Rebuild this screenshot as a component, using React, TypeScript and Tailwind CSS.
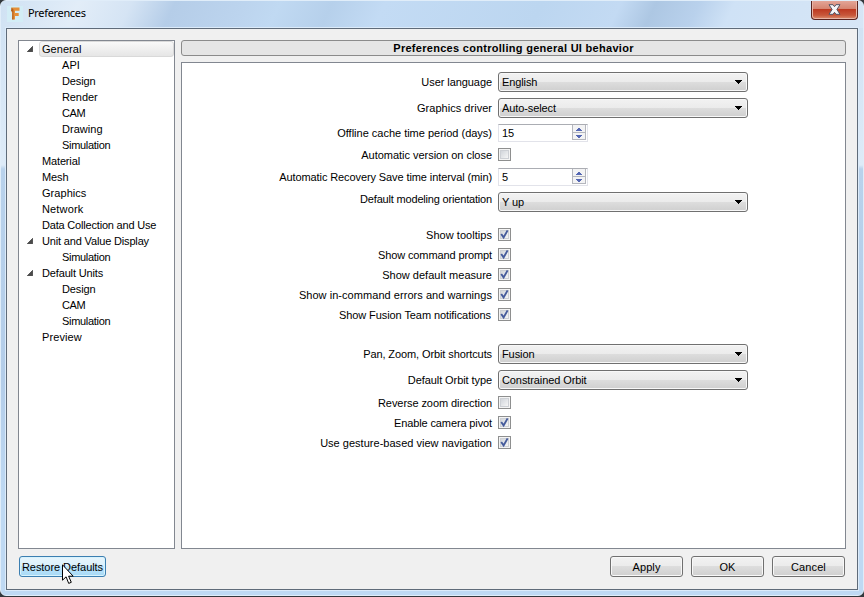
import React, { useState } from "react";

type ControlKind = "combo" | "spin" | "check";

interface SettingRow {
  label: string;
  kind: ControlKind;
  value?: string;
  checked?: boolean;
  className: string;
  labelClass: string;
}

interface TreeItem {
  label: string;
  child?: boolean;
  open?: boolean;
  tracking?: string;
}

const TREE: TreeItem[] = [
  { label: "General", open: true, tracking: "tracking-[0.05px]" },
  { label: "API", child: true, tracking: "tracking-[0.1px]" },
  { label: "Design", child: true },
  { label: "Render", child: true },
  { label: "CAM", child: true, tracking: "tracking-[-0.4px]" },
  { label: "Drawing", child: true, tracking: "tracking-[0.05px]" },
  { label: "Simulation", child: true, tracking: "tracking-[-0.3px]" },
  { label: "Material", tracking: "tracking-[-0.15px]" },
  { label: "Mesh" },
  { label: "Graphics", tracking: "tracking-[0.05px]" },
  { label: "Network", tracking: "tracking-[0.15px]" },
  { label: "Data Collection and Use", tracking: "tracking-[-0.19px]" },
  { label: "Unit and Value Display", open: true, tracking: "tracking-[-0.16px]" },
  { label: "Simulation", child: true, tracking: "tracking-[-0.3px]" },
  { label: "Default Units", open: true, tracking: "tracking-[-0.15px]" },
  { label: "Design", child: true },
  { label: "CAM", child: true, tracking: "tracking-[-0.4px]" },
  { label: "Simulation", child: true, tracking: "tracking-[-0.3px]" },
  { label: "Preview", tracking: "tracking-[0.1px]" },
];

const ROWS: SettingRow[] = [
  { label: "User language", kind: "combo", value: "English", className: "mt-[9px] h-5", labelClass: "tracking-[-0.07px]" },
  { label: "Graphics driver", kind: "combo", value: "Auto-select", className: "mt-1.5 h-5", labelClass: "tracking-[0.03px]" },
  { label: "Offline cache time period (days)", kind: "spin", value: "15", className: "mt-1.5 h-[18px]", labelClass: "tracking-[-0.01px]" },
  { label: "Automatic version on close", kind: "check", className: "mt-1.5 h-[13px]", labelClass: "pt-0.5 tracking-[-0.03px]" },
  { label: "Automatic Recovery Save time interval (min)", kind: "spin", value: "5", className: "mt-[7px] h-[18px]", labelClass: "tracking-[-0.1px]" },
  { label: "Default modeling orientation", kind: "combo", value: "Y up", className: "mt-1.5 h-5", labelClass: "pb-[5px] tracking-[-0.18px]" },
  { label: "Show tooltips", kind: "check", checked: true, className: "mt-4 h-[13px]", labelClass: "pt-0.5 tracking-[0.04px]" },
  { label: "Show command prompt", kind: "check", checked: true, className: "mt-[7px] h-[13px]", labelClass: "pt-0.5 tracking-[-0.11px]" },
  { label: "Show default measure", kind: "check", checked: true, className: "mt-[7px] h-[13px]", labelClass: "pt-0.5 tracking-[0.02px]" },
  { label: "Show in-command errors and warnings", kind: "check", checked: true, className: "mt-[7px] h-[13px]", labelClass: "pt-0.5 tracking-[0.05px]" },
  { label: "Show Fusion Team notifications", kind: "check", checked: true, className: "mt-[7px] h-[13px]", labelClass: "pt-0.5 pr-px tracking-[-0.08px]" },
  { label: "Pan, Zoom, Orbit shortcuts", kind: "combo", value: "Fusion", className: "mt-[23px] h-5", labelClass: "tracking-[-0.1px]" },
  { label: "Default Orbit type", kind: "combo", value: "Constrained Orbit", className: "mt-1.5 h-5", labelClass: "tracking-[-0.08px]" },
  { label: "Reverse zoom direction", kind: "check", className: "mt-1.5 h-[13px]", labelClass: "pt-0.5 tracking-[-0.07px]" },
  { label: "Enable camera pivot", kind: "check", checked: true, className: "mt-[7px] h-[13px]", labelClass: "pt-0.5 tracking-[-0.12px]" },
  { label: "Use gesture-based view navigation", kind: "check", checked: true, className: "mt-[7px] h-[13px]", labelClass: "pt-0.5 tracking-[0.02px]" },
];

function Combo({ value }: { value?: string }) {
  return (
    <button className="flex h-5 w-[250px] items-center justify-between rounded-[3px] border border-[#707070] bg-[linear-gradient(#f2f2f2_0%,#ebebeb_50%,#dddddd_50%,#cfcfcf_100%)] pr-[5px] pl-[3px] shadow-[inset_0_0_0_1px_#f8f8f8]">
      <span>{value}</span>
      <svg width="7" height="4" viewBox="0 0 7 4" shapeRendering="crispEdges">
        <path d="M0 0h7v1H0zM1 1h5v1H1zM2 2h3v1H2zM3 3h1v1H3z" fill="#000" />
      </svg>
    </button>
  );
}

function Spin({ value }: { value?: string }) {
  return (
    <div className="flex h-[18px] w-[90px] justify-between border border-[#e2e3ea] border-t-[#abadb3] bg-white pl-[3px]">
      <span className="leading-[17px]">{value}</span>
      <svg width="14" height="16" viewBox="0 0 14 16" shapeRendering="crispEdges" className="mr-px">
        <rect width="14" height="15" fill="#b4b6bd" />
        <rect x="1" y="0" width="12" height="7" fill="#f3f3f4" />
        <rect x="1" y="8" width="12" height="6" fill="#f3f3f4" />
        <path d="M6 3h2v1H6zM5 4h4v1H5zM4 5h6v1H4z" fill="#5467b3" />
        <path d="M4 10h6v1H4zM5 11h4v1H5zM6 12h2v1H6z" fill="#5467b3" />
      </svg>
    </div>
  );
}

function Check({ checked, onClick }: { checked: boolean; onClick: () => void }) {
  return (
    <button onClick={onClick} className="h-[13px] w-[13px]">
      <svg width="13" height="13" viewBox="0 0 13 13">
        <defs>
          <linearGradient id="well" x1="0" y1="0" x2="1" y2="1">
            <stop offset="0" stopColor="#cfd3d9" />
            <stop offset="1" stopColor="#f8f8f8" />
          </linearGradient>
        </defs>
        <rect x="0.5" y="0.5" width="12" height="12" fill="#f4f4f4" stroke="#8e8f8f" />
        <rect x="2.5" y="2.5" width="8" height="8" fill="url(#well)" stroke="#cdd0d5" />
        {checked && <path d="M3.2 6 5.6 9.4 9.6 2.4" fill="none" stroke="#465c9c" strokeWidth="1.9" />}
      </svg>
    </button>
  );
}

function DialogButton({ children }: { children: React.ReactNode }) {
  return (
    <button className="h-[21px] w-[73px] rounded-[3px] border border-[#707070] bg-[linear-gradient(#f2f2f2_0%,#ebebeb_50%,#dddddd_50%,#cfcfcf_100%)] pt-px leading-[19px] tracking-[0.1px] shadow-[inset_0_0_0_1px_#f8f8f8]">
      {children}
    </button>
  );
}

export default function App() {
  const [selected, setSelected] = useState(0);
  const [checks, setChecks] = useState(ROWS.map((r) => !!r.checked));

  const toggle = (i: number) => setChecks((prev) => prev.map((c, n) => (n === i ? !c : c)));

  return (
    <div className="h-[597px] w-[864px] overflow-hidden bg-[#33383d] font-['Liberation_Sans',Arial,sans-serif] text-[11px] tracking-[-0.1px] whitespace-nowrap text-black">
      {/* Glass frame: side borders darken below the upper quarter */}
      <div className="flex h-[596px] flex-col overflow-hidden rounded-[6px] border border-[#e0edf9] bg-[linear-gradient(#cfe1f3_0px,#deebf8_164px,#b9d2ec_168px,#b4cde9_380px,#bfd9f3_500px,#bfd9f3_100%)] px-[5px] pb-1.5">
        {/* Title bar */}
        <header className="-mx-[5px] flex h-[27px] shrink-0 justify-between bg-[linear-gradient(115deg,#cfe1f3_0%,#e2edf8_9%,#d5e4f4_15%,#b5cde8_20%,#bcd4ee_28%,#c0d9f2_32%,#b6d0eb_38%,#c3dbf4_44%,#bcd6f0_62%,#c3daf3_71%,#adc7e3_75%,#b9d1ec_80%,#cfe2f6_84%,#d7e6f6_100%)] px-[5px]">
          <div className="flex items-center gap-[5px] pb-px pl-px">
            <svg width="16" height="16" viewBox="0 0 16 16">
              <rect width="16" height="16" fill="#d3edf6" />
              <path d="M4.5 1.5H12.500v3.200H8v2.300h3.700v3H8v3.500H5.500z" fill="#e58f38" />
              <path d="M4.500 1.500 6.500 3.500V13.500H5L5.500 6 4 5z" fill="#b5621f" />
            </svg>
            <span className="pb-px font-['Noto_Sans',sans-serif] text-[11px] tracking-[-0.33px]">Preferences</span>
          </div>
          <button className="-mt-px flex h-[20px] w-[47px] items-center justify-center rounded-b-[4px] border border-t-0 border-[#5a2420] bg-[linear-gradient(#e5a99c_0%,#d5836f_48%,#bd3a22_50%,#c8573b_80%,#dc8f70_100%)] shadow-[inset_0_0_0_1px_#e9b6a8]">
            <svg width="13" height="11" viewBox="0 0 13 11">
              <path d="M1 .7h4l1.500 2 1.500-2h4L8.900 5.500l3.100 4.800H8L6.500 8.300 5 10.300H1l3.100-4.800z" fill="#f6f6f8" stroke="#535666" />
            </svg>
          </button>
        </header>

        {/* Client area */}
        <main className="flex flex-1 flex-col border border-[#5f6b79] bg-[#f0f0f0] px-[11px] pt-[11px] pb-3 shadow-[0_0_0_1px_#dcebfa]">
          <div className="flex h-[509px] gap-1.5">
            <nav className="w-[157px] border border-[#828790] bg-white">
              {TREE.map((item, i) => (
                <div key={i} onClick={() => setSelected(i)} className="flex h-4 items-center">
                  <div className="flex w-5 justify-center pl-0.5">
                    {item.open && (
                      <svg width="6" height="6" viewBox="0 0 6 6">
                        <path d="M5.700.3v5.400H.3z" fill="#4a4a4a" stroke="#262626" strokeWidth=".6" />
                      </svg>
                    )}
                  </div>
                  <div
                    className={`${item.tracking ?? ""} ${
                      i === selected
                        ? "flex h-4 flex-1 items-center rounded-[3px] border border-[#d9d9d9] bg-linear-to-b from-[#f9f9f9] to-[#e6e6e6] pl-0.5"
                        : item.child
                          ? "pl-[23px]"
                          : "pl-[3px]"
                    }`}
                  >
                    {item.label}
                  </div>
                </div>
              ))}
            </nav>

            <section className="flex w-[665px] flex-col gap-1.5">
              <h1 className="h-4 rounded-[3px] border border-[#8b8b8b] bg-[#e5e5e5] text-center leading-[15px] font-bold tracking-[0.29px]">
                Preferences controlling general UI behavior
              </h1>
              <div className="flex-1 border border-[#828790] bg-white">
                {ROWS.map((row, i) => (
                  <div key={row.label} className={`flex items-center gap-1.5 ${row.className}`}>
                    <label className={`w-[310px] text-right ${row.labelClass}`}>{row.label}</label>
                    {row.kind === "combo" && <Combo value={row.value} />}
                    {row.kind === "spin" && <Spin value={row.value} />}
                    {row.kind === "check" && <Check checked={checks[i]} onClick={() => toggle(i)} />}
                  </div>
                ))}
              </div>
            </section>
          </div>

          {/* Footer buttons */}
          <footer className="mt-[7px] flex justify-between pr-px pl-px">
            <button className="relative h-[21px] w-[87px] rounded-[3px] border border-[#3c7fb1] bg-[linear-gradient(#e8f5fc_0%,#d9f0fc_50%,#bee6fd_50%,#a7d9f5_100%)] pt-px leading-[19px] tracking-[-0.05px] shadow-[inset_0_0_0_1px_#d8f3fd]">
              Restore Defaults
              {/* Mouse pointer resting on the button */}
              <svg width="12" height="21" viewBox="0 0 12 21" className="absolute top-[7px] left-[42px]">
                <path d="M.5.8v15.400l3.600-3.400 2.600 6.600 2.600-1.100-2.700-6.100h4.600z" fill="#fff" stroke="#000" />
              </svg>
            </button>
            <div className="flex gap-2">
              <DialogButton>Apply</DialogButton>
              <DialogButton>OK</DialogButton>
              <DialogButton>Cancel</DialogButton>
            </div>
          </footer>
        </main>
      </div>
    </div>
  );
}
